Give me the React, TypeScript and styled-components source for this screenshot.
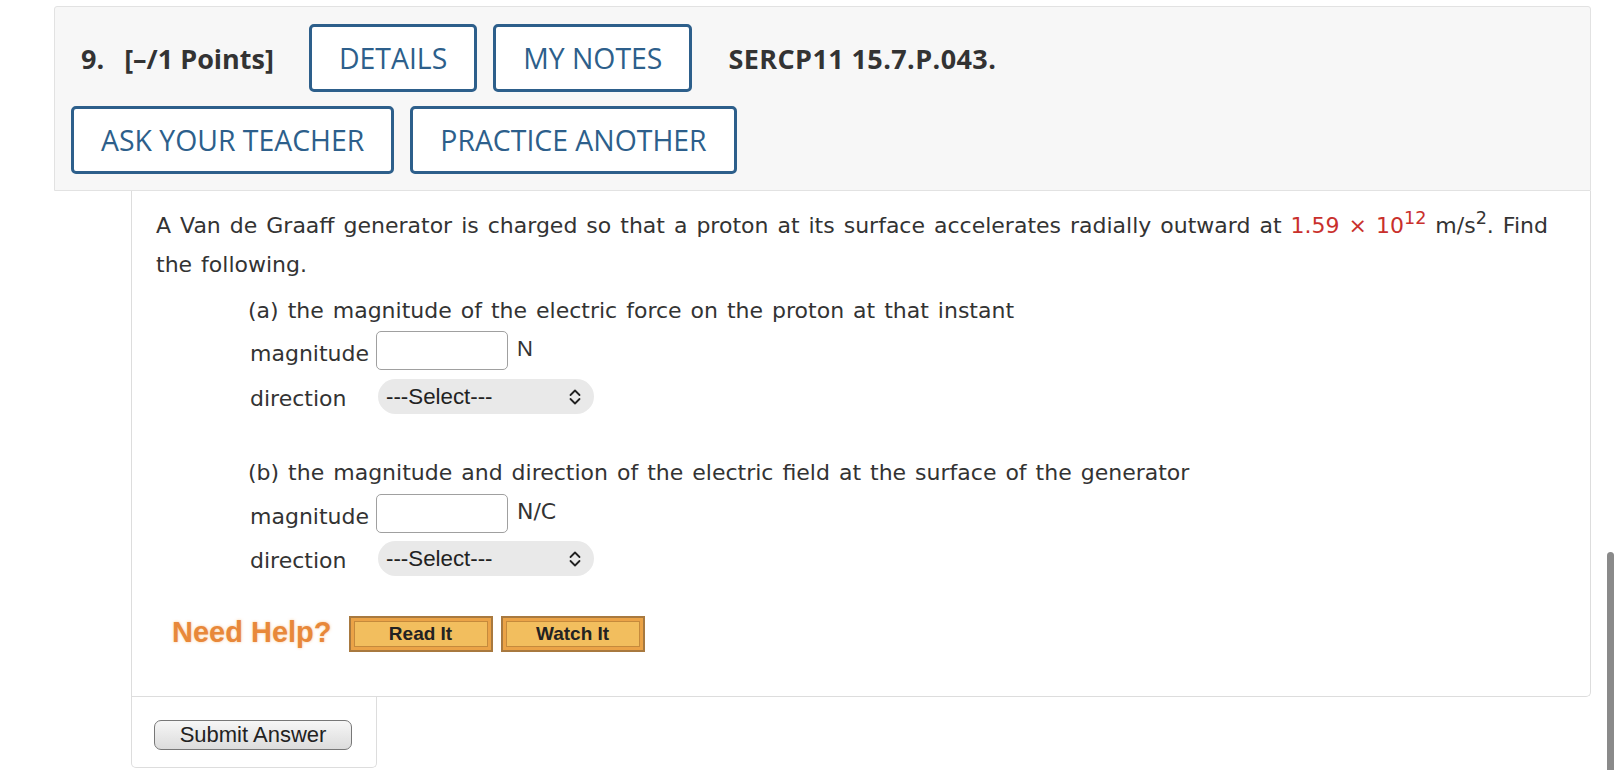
import React from "react";
import styled, { createGlobalStyle } from "styled-components";

const GlobalStyle = createGlobalStyle`
  html, body { margin: 0; padding: 0; background: #ffffff; }
  body { font-family: "DejaVu Sans", Verdana, sans-serif; color: #333333; }
  * { box-sizing: border-box; }
`;

const Page = styled.div`
  width: 1537px;
  margin: 6px 0 0 54px;
`;

const Header = styled.div`
  background: #f7f7f7;
  border: 1px solid #e2e2e2;
  border-radius: 3px 3px 0 0;
  padding: 17px 16px 16px 16px;
  display: flex;
  flex-direction: column;
  gap: 14px;
`;

const HeaderRow = styled.div`
  display: flex;
  align-items: center;
  gap: 16px;
`;

const QNum = styled.div`
  font-family: "Open Sans", sans-serif;
  font-weight: 700;
  font-size: 27px;
  color: #333333;
  margin: 0 19px 0 10px;
  display: flex;
  gap: 20px;
`;

const Ref = styled.div`
  font-family: "Open Sans", sans-serif;
  font-weight: 700;
  font-size: 27px;
  letter-spacing: 0.4px;
  color: #333333;
  margin-left: 20px;
`;

const OutlineButton = styled.button<{ $pad?: number }>`
  height: 68px;
  padding: 0 ${(p) => p.$pad ?? 27}px;
  background: #ffffff;
  border: 3px solid #2d5f8b;
  border-radius: 5px;
  color: #2d5f8b;
  font-family: "Open Sans", sans-serif;
  font-size: 28.4px;
  font-weight: 400;
  cursor: pointer;
`;

const Body = styled.div`
  margin-left: 77px;
  border: 1px solid #dddddd;
  border-top: none;
  border-radius: 0 0 5px 0;
  padding: 15px 30px 44px 24px;
  color: #333333;
  font-size: 22px;
  word-spacing: 2px;
`;

const Para = styled.p`
  margin: 0;
  line-height: 39px;
`;

const Red = styled.span`
  color: #c9302c;
`;

const Sup = styled.sup`
  font-size: 0.8em;
  line-height: 0;
  vertical-align: 0.5em;
`;

const Part = styled.div<{ $top: number }>`
  margin: ${(p) => p.$top}px 0 0 92px;
`;

const PartTitle = styled.div`
  line-height: 39px;
`;

const FieldRow = styled.div<{ $top: number }>`
  display: flex;
  align-items: center;
  margin-top: ${(p) => p.$top}px;
  margin-left: 2px;
`;

const FieldLabel = styled.span<{ $drop: number }>`
  width: 126px;
  flex: none;
  margin-top: ${(p) => p.$drop}px;
`;

const TextInput = styled.input`
  width: 132px;
  height: 39px;
  border: 1px solid #a0a0a0;
  border-radius: 5px;
  background: #ffffff;
  margin-right: 9px;
`;

const Unit = styled.span<{ $arial?: boolean }>`
  align-self: flex-start;
  font-family: ${(p) => (p.$arial ? '"Liberation Sans", Arial, sans-serif' : '"DejaVu Sans", Verdana, sans-serif')};
  font-size: 22px;
  line-height: 36px;
`;

const SelectBox = styled.div`
  width: 216px;
  height: 35px;
  margin-left: 2px;
  border-radius: 18px;
  background: #e9e9e9;
  display: flex;
  align-items: center;
  justify-content: space-between;
  padding: 0 12px 0 8px;
  font-family: "Liberation Sans", Arial, sans-serif;
  font-size: 22.3px;
  word-spacing: 0;
  color: #222222;
`;

const HelpRow = styled.div`
  display: flex;
  align-items: center;
  margin: 37px 0 0 16px;
  word-spacing: 0;
`;

const NeedHelp = styled.span`
  font-family: "Liberation Sans", Arial, sans-serif;
  font-weight: 700;
  font-size: 29px;
  color: #e8883a;
  text-shadow: 0 0 3px rgba(245, 180, 110, 0.7);
  margin-right: 17px;
`;

const HelpButton = styled.button`
  width: 144px;
  height: 36px;
  margin-right: 8px;
  margin-top: 3px;
  background: #f2be5e;
  border: 2px solid #a8793f;
  box-shadow: inset 0 0 0 3px #eba347, inset 0 0 0 4px #c58a3c;
  font-family: "Liberation Sans", Arial, sans-serif;
  font-weight: 700;
  font-size: 19px;
  color: #222222;
  padding: 0;
  cursor: pointer;
`;

const SubmitArea = styled.div`
  margin-left: 77px;
  width: 246px;
  height: 71px;
  border: 1px solid #dddddd;
  border-top: none;
  border-radius: 0 0 5px 5px;
  padding: 23px 0 0 22px;
`;

const SubmitButton = styled.button`
  width: 198px;
  height: 30px;
  border: 1px solid #777777;
  border-radius: 7px;
  background: linear-gradient(#f6f6f6, #dcdcdc);
  font-family: "Liberation Sans", Arial, sans-serif;
  font-size: 22px;
  color: #222222;
  padding: 0;
  line-height: 28px;
  cursor: pointer;
`;

const ScrollThumb = styled.div`
  position: fixed;
  left: 1607px;
  top: 552px;
  width: 7px;
  bottom: 0;
  background: #8a8a8a;
  border-radius: 4px 4px 0 0;
`;

const Chevrons = () => (
  <svg width="14" height="18" viewBox="0 0 14 18" fill="none" stroke="#222" strokeWidth="1.8" strokeLinecap="round" strokeLinejoin="round">
    <polyline points="2.5,7 7,2.5 11.5,7" />
    <polyline points="2.5,11 7,15.5 11.5,11" />
  </svg>
);

const Select = () => (
  <SelectBox>
    <span>---Select---</span>
    <Chevrons />
  </SelectBox>
);

export default function App() {
  return (
    <>
      <GlobalStyle />
      <Page>
        <Header>
          <HeaderRow>
            <QNum>
              <span>9.</span>
              <span>[–/1 Points]</span>
            </QNum>
            <OutlineButton>DETAILS</OutlineButton>
            <OutlineButton>MY NOTES</OutlineButton>
            <Ref>SERCP11 15.7.P.043.</Ref>
          </HeaderRow>
          <HeaderRow>
            <OutlineButton>ASK YOUR TEACHER</OutlineButton>
            <OutlineButton>PRACTICE ANOTHER</OutlineButton>
          </HeaderRow>
        </Header>
        <Body>
          <Para>
            A Van de Graaff generator is charged so that a proton at its surface accelerates radially outward at{" "}
            <Red>
              1.59 × 10<Sup>12</Sup>
            </Red>{" "}
            m/s<Sup>2</Sup>. Find the following.
          </Para>
          <Part $top={7}>
            <PartTitle>(a) the magnitude of the electric force on the proton at that instant</PartTitle>
            <FieldRow $top={1}>
              <FieldLabel $drop={6}>magnitude</FieldLabel>
              <TextInput type="text" />
              <Unit $arial>N</Unit>
            </FieldRow>
            <FieldRow $top={9}>
              <FieldLabel $drop={4}>direction</FieldLabel>
              <Select />
            </FieldRow>
          </Part>
          <Part $top={39}>
            <PartTitle>(b) the magnitude and direction of the electric field at the surface of the generator</PartTitle>
            <FieldRow $top={2}>
              <FieldLabel $drop={6}>magnitude</FieldLabel>
              <TextInput type="text" />
              <Unit>N/C</Unit>
            </FieldRow>
            <FieldRow $top={8}>
              <FieldLabel $drop={4}>direction</FieldLabel>
              <Select />
            </FieldRow>
          </Part>
          <HelpRow>
            <NeedHelp>Need Help?</NeedHelp>
            <HelpButton>Read It</HelpButton>
            <HelpButton>Watch It</HelpButton>
          </HelpRow>
        </Body>
        <SubmitArea>
          <SubmitButton>Submit Answer</SubmitButton>
        </SubmitArea>
      </Page>
      <ScrollThumb />
    </>
  );
}
